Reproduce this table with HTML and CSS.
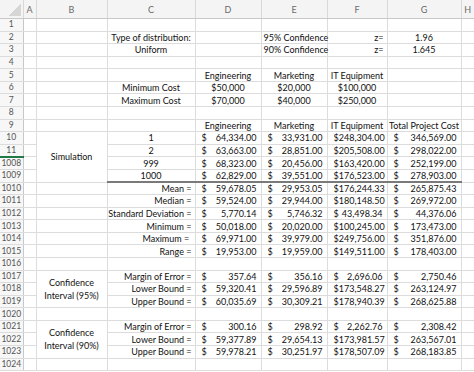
FILE: index.html
```html
<!DOCTYPE html>
<html>
<head>
<meta charset="utf-8">
<link rel="stylesheet" href="styles.css">
</head>
<body>
<div class="sheet">
<table>
<colgroup>
<col class="w-rh"><col class="w-a"><col class="w-b"><col class="w-c"><col class="w-d"><col class="w-e"><col class="w-f"><col class="w-g"><col class="w-h">
</colgroup>
<thead>
<tr><th class="corner"></th><th>A</th><th>B</th><th>C</th><th>D</th><th>E</th><th>F</th><th>G</th><th>H</th></tr>
</thead>
<tbody>
<tr><th>1</th><td></td><td></td><td></td><td></td><td></td><td></td><td></td><td></td></tr>
<tr><th>2</th><td></td><td></td><td class="c">Type of distribution:</td><td></td><td class="l">95% Confidence</td><td class="r">z=</td><td class="c">1.96</td><td></td></tr>
<tr><th>3</th><td></td><td></td><td class="c">Uniform</td><td></td><td class="l">90% Confidence</td><td class="r">z=</td><td class="c">1.645</td><td></td></tr>
<tr><th>4</th><td></td><td></td><td></td><td></td><td></td><td></td><td></td><td></td></tr>
<tr><th>5</th><td></td><td></td><td></td><td class="c">Engineering</td><td class="c">Marketing</td><td class="c">IT Equipment</td><td></td><td></td></tr>
<tr><th>6</th><td></td><td></td><td class="c">Minimum Cost</td><td class="c">$50,000</td><td class="c">$20,000</td><td class="c">$100,000</td><td></td><td></td></tr>
<tr><th>7</th><td></td><td></td><td class="c">Maximum Cost</td><td class="c">$70,000</td><td class="c">$40,000</td><td class="c">$250,000</td><td></td><td></td></tr>
<tr><th>8</th><td></td><td></td><td></td><td></td><td></td><td></td><td></td><td></td></tr>
<tr><th>9</th><td></td><td></td><td></td><td class="c">Engineering</td><td class="c">Marketing</td><td class="c">IT Equipment</td><td class="c">Total Project Cost</td><td></td></tr>
<tr><th>10</th><td></td><td class="c m" rowspan="4">Simulation</td><td class="c">1</td><td class="n"><span class="d">$</span>64,334.00</td><td class="n"><span class="d">$</span>33,931.00</td><td class="n"><span class="d">$</span>248,304.00</td><td class="n"><span class="d">$</span>346,569.00</td><td></td></tr>
<tr><th class="split">11</th><td></td><td class="c">2</td><td class="n"><span class="d">$</span>63,663.00</td><td class="n"><span class="d">$</span>28,851.00</td><td class="n"><span class="d">$</span>205,508.00</td><td class="n"><span class="d">$</span>298,022.00</td><td></td></tr>
<tr><th>1008</th><td></td><td class="c">999</td><td class="n"><span class="d">$</span>68,323.00</td><td class="n"><span class="d">$</span>20,456.00</td><td class="n"><span class="d">$</span>163,420.00</td><td class="n"><span class="d">$</span>252,199.00</td><td></td></tr>
<tr class="tot"><th>1009</th><td></td><td class="c k">1000</td><td class="n k"><span class="d">$</span>62,829.00</td><td class="n k"><span class="d">$</span>39,551.00</td><td class="n k"><span class="d">$</span>176,523.00</td><td class="n k"><span class="d">$</span>278,903.00</td><td></td></tr>
<tr><th>1010</th><td></td><td></td><td class="r">Mean =</td><td class="n"><span class="d">$</span>59,678.05</td><td class="n"><span class="d">$</span>29,953.05</td><td class="n"><span class="d">$</span>176,244.33</td><td class="n"><span class="d">$</span>265,875.43</td><td></td></tr>
<tr><th>1011</th><td></td><td></td><td class="r">Median =</td><td class="n"><span class="d">$</span>59,524.00</td><td class="n"><span class="d">$</span>29,944.00</td><td class="n"><span class="d">$</span>180,148.50</td><td class="n"><span class="d">$</span>269,972.00</td><td></td></tr>
<tr><th>1012</th><td></td><td></td><td class="r">Standard Deviation =</td><td class="n"><span class="d">$</span>5,770.14</td><td class="n"><span class="d">$</span>5,746.32</td><td class="n"><span class="d">$</span>43,498.34</td><td class="n"><span class="d">$</span>44,376.06</td><td></td></tr>
<tr><th>1013</th><td></td><td></td><td class="r">Minimum =</td><td class="n"><span class="d">$</span>50,018.00</td><td class="n"><span class="d">$</span>20,020.00</td><td class="n"><span class="d">$</span>100,245.00</td><td class="n"><span class="d">$</span>173,473.00</td><td></td></tr>
<tr><th>1014</th><td></td><td></td><td class="r">Maximum =&nbsp;</td><td class="n"><span class="d">$</span>69,971.00</td><td class="n"><span class="d">$</span>39,979.00</td><td class="n"><span class="d">$</span>249,756.00</td><td class="n"><span class="d">$</span>351,876.00</td><td></td></tr>
<tr><th>1015</th><td></td><td></td><td class="r">Range =</td><td class="n"><span class="d">$</span>19,953.00</td><td class="n"><span class="d">$</span>19,959.00</td><td class="n"><span class="d">$</span>149,511.00</td><td class="n"><span class="d">$</span>178,403.00</td><td></td></tr>
<tr><th>1016</th><td></td><td></td><td></td><td></td><td></td><td></td><td></td><td></td></tr>
<tr><th>1017</th><td></td><td class="c m wrap" rowspan="3">Confidence<br>Interval (95%)</td><td class="r">Margin of Error =</td><td class="n"><span class="d">$</span>357.64</td><td class="n"><span class="d">$</span>356.16</td><td class="n"><span class="d">$</span>2,696.06</td><td class="n"><span class="d">$</span>2,750.46</td><td></td></tr>
<tr><th>1018</th><td></td><td class="r">Lower Bound =</td><td class="n"><span class="d">$</span>59,320.41</td><td class="n"><span class="d">$</span>29,596.89</td><td class="n"><span class="d">$</span>173,548.27</td><td class="n"><span class="d">$</span>263,124.97</td><td></td></tr>
<tr><th>1019</th><td></td><td class="r">Upper Bound =</td><td class="n"><span class="d">$</span>60,035.69</td><td class="n"><span class="d">$</span>30,309.21</td><td class="n"><span class="d">$</span>178,940.39</td><td class="n"><span class="d">$</span>268,625.88</td><td></td></tr>
<tr><th>1020</th><td></td><td></td><td></td><td></td><td></td><td></td><td></td><td></td></tr>
<tr><th>1021</th><td></td><td class="c m wrap" rowspan="3">Confidence<br>Interval (90%)</td><td class="r">Margin of Error =</td><td class="n"><span class="d">$</span>300.16</td><td class="n"><span class="d">$</span>298.92</td><td class="n"><span class="d">$</span>2,262.76</td><td class="n"><span class="d">$</span>2,308.42</td><td></td></tr>
<tr><th>1022</th><td></td><td class="r">Lower Bound =</td><td class="n"><span class="d">$</span>59,377.89</td><td class="n"><span class="d">$</span>29,654.13</td><td class="n"><span class="d">$</span>173,981.57</td><td class="n"><span class="d">$</span>263,567.01</td><td></td></tr>
<tr><th>1023</th><td></td><td class="r">Upper Bound =</td><td class="n"><span class="d">$</span>59,978.21</td><td class="n"><span class="d">$</span>30,251.97</td><td class="n"><span class="d">$</span>178,507.09</td><td class="n"><span class="d">$</span>268,183.85</td><td></td></tr>
<tr><th>1024</th><td></td><td></td><td></td><td></td><td></td><td></td><td></td><td></td></tr>
</tbody>
</table>
</div>
</body>
</html>
```
FILE: styles.css
```css
html, body {
  margin: 0;
  padding: 0;
  background: #ffffff;
  overflow: hidden;
}
.sheet {
  width: 474px;
  height: 372px;
  overflow: hidden;
  font-family: Lato, "Liberation Sans", sans-serif;
  font-size: 9px;
  color: #111;
}
table {
  border-collapse: collapse;
  table-layout: fixed;
  width: 474px;
}
.w-rh { width: 23px; }
.w-a { width: 13px; }
.w-b { width: 71px; }
.w-c { width: 88px; }
.w-d { width: 66px; }
.w-e { width: 66px; }
.w-f { width: 60px; }
.w-g { width: 74px; }
.w-h { width: 13px; }
thead th {
  height: 18px;
  background: #f4f4f4;
  color: #6a6a6a;
  font-weight: normal;
  font-size: 9px;
  text-align: center;
  border-right: 1px solid #d8d8d8;
  border-bottom: 1px solid #c8c8c8;
  padding: 0;
}
thead th:last-child {
  border-right: none;
}
thead th.corner {
  background: linear-gradient(135deg, #f4f4f4 52%, #d6d6d6 52%) no-repeat;
  background-size: 13px 13px;
  background-position: 8px 3px;
  background-color: #f4f4f4;
}
tbody tr {
  height: 12.59px;
}
tbody th {
  background: #f7f7f7;
  color: #555;
  font-weight: normal;
  font-size: 8.5px;
  text-align: center;
  padding: 0;
  border-right: 1px solid #c8c8c8;
  border-bottom: 1px solid #dcdcdc;
  line-height: 11px;
}
tbody th.split {
  border-bottom: 2px solid #1f7a47;
}
td {
  padding: 0;
  border-right: 1px solid #dcdcdc;
  border-bottom: 1px solid #dcdcdc;
  white-space: nowrap;
  line-height: 11px;
  overflow: visible;
}
td:last-child {
  border-right: none;
}
td.c { text-align: center; }
td.l { text-align: left; padding-left: 2px; }
td.r { text-align: right; padding-right: 3px; white-space: pre; }
td.n { text-align: right; padding: 0 4px 0 6px; }
td.n .d { float: left; }
td.m { vertical-align: middle; }
td.wrap { line-height: 13px; }
tr.tot td.k { border-bottom: 2px solid #7a7a7a; }
```
